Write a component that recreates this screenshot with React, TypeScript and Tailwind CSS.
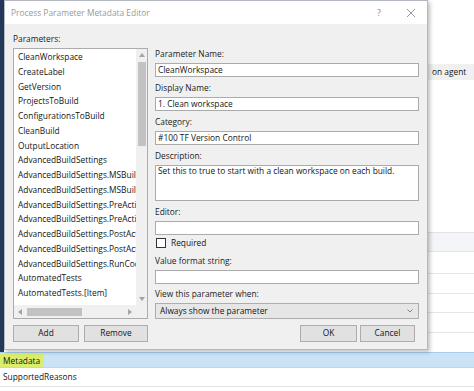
import React from "react";

const items = [
  "CleanWorkspace",
  "CreateLabel",
  "GetVersion",
  "ProjectsToBuild",
  "ConfigurationsToBuild",
  "CleanBuild",
  "OutputLocation",
  "AdvancedBuildSettings",
  "AdvancedBuildSettings.MSBuildArguments",
  "AdvancedBuildSettings.MSBuildPlatform",
  "AdvancedBuildSettings.PreActionScriptPath",
  "AdvancedBuildSettings.PreActionScriptArguments",
  "AdvancedBuildSettings.PostActionScriptPath",
  "AdvancedBuildSettings.PostActionScriptArguments",
  "AdvancedBuildSettings.RunCodeAnalysis",
  "AutomatedTests",
  "AutomatedTests.[Item]",
];

function Label({ children, className = "" }: { children: React.ReactNode; className?: string }) {
  return <div className={"h-[12px] leading-[12px] text-[#222222] whitespace-nowrap " + className}>{children}</div>;
}

function Input({ value = "", className = "" }: { value?: string; className?: string }) {
  return (
    <div className={"h-[14px] border border-[#ababab] bg-white pl-[2px] leading-[12px] text-[#141414] whitespace-nowrap overflow-hidden " + className}>
      {value}
    </div>
  );
}

function Btn({ children, className = "" }: { children: React.ReactNode; className?: string }) {
  return (
    <div className={"h-[17px] border border-[#adadad] bg-[#e1e1e1] flex items-center justify-center text-[#141414] " + className}>
      {children}
    </div>
  );
}

function Tri({ dir }: { dir: "up" | "down" | "left" | "right" }) {
  const pts =
    dir === "up" ? "0,4 3,0 6,4" : dir === "down" ? "0,0 6,0 3,4" : dir === "left" ? "4,0 4,6 0,3" : "0,0 0,6 4,3";
  const w = dir === "up" || dir === "down" ? 6 : 4;
  const h = dir === "up" || dir === "down" ? 4 : 6;
  return (
    <svg width={w} height={h} viewBox={`0 0 ${w} ${h}`}>
      <polygon points={pts} fill="#a3a3a3" />
    </svg>
  );
}

export default function App() {
  return (
    <div className="relative w-[474px] h-[391px] overflow-hidden bg-white text-[8.35px] text-[#141414] font-['Open_Sans',sans-serif]">
      {/* background page */}
      <div className="flex flex-col">
        <div className="flex h-[352px]">
          <div className="w-[4px] bg-[#26385a]" />
          <div className="flex-1 flex flex-col">
            <div className="h-[64px]" />
            <div className="h-[16px] bg-[#f0f0f0] flex items-center pl-[428px] whitespace-nowrap">on agent</div>
            <div className="h-[152px]" />
            <div className="h-[19px] border-t border-[#e2e2e2] bg-[#f3f5f8]" />
            <div className="h-[22px] border-t border-[#e6e6e6]" />
            <div className="h-[20px] border-t border-[#e6e6e6]" />
            <div className="h-[19px] border-t border-[#e6e6e6]" />
            <div className="h-[20px] border-t border-[#e6e6e6]" />
            <div className="h-[20px] border-t border-[#e6e6e6]" />
          </div>
        </div>
        <div className="h-[16px] bg-[#cbe3f7] border-t border-[#a9cdee] border-b border-b-[#b9d7f1] flex items-center">
          <span className="bg-[#dbee6a] pl-[3px] pr-[4px] h-[13px] leading-[13px] rounded-r-[3px]">Metadata</span>
        </div>
        <div className="h-[19px] border-b border-[#e3e3e3] flex items-center pl-[3px]">SupportedReasons</div>
      </div>

      {/* dialog window */}
      <div className="absolute left-[4px] top-0 w-[424px] h-[350px] flex flex-col bg-[#f0f0f0] border border-[#b4b8c0] shadow-[2px_2px_4px_rgba(0,0,0,0.25)]">
        <div className="h-[23px] bg-white flex items-center pl-[6px] pr-[10px] pt-[1px]">
          <span className="text-[#9a9a9a] text-[8.4px] whitespace-nowrap">Process Parameter Metadata Editor</span>
          <div className="flex-1" />
          <span className="text-[#8a8a8a] text-[9px] mr-[25px]">?</span>
          <svg width="10" height="10" viewBox="0 0 10 10" className="mr-[1px]">
            <path d="M1 1 L9 9 M9 1 L1 9" stroke="#8a8a8a" strokeWidth="0.9" />
          </svg>
        </div>

        <div className="flex flex-col px-[8px] pt-[9px]">
          <div className="flex gap-[7px]">
            {/* left column */}
            <div className="w-[135px] flex flex-col">
              <Label className="mb-[3px]">Parameters:</Label>
              <div className="h-[271px] border border-[#acacac] bg-white flex flex-col">
                <div className="flex flex-1 min-h-0">
                  <div className="flex-1 overflow-hidden pl-[4px] pt-[1px]">
                    {items.map((t) => (
                      <div key={t} className="h-[14.75px] leading-[14.75px] whitespace-nowrap text-[#141414]">
                        {t}
                      </div>
                    ))}
                  </div>
                  <div className="w-[11px] bg-[#f0f0f0] flex flex-col items-center">
                    <div className="h-[12px] flex items-center justify-center">
                      <Tri dir="up" />
                    </div>
                    <div className="w-[8px] h-[84px] mt-[1px] bg-[#c2c2c2]" />
                    <div className="flex-1" />
                    <div className="h-[12px] flex items-center justify-center">
                      <Tri dir="down" />
                    </div>
                  </div>
                </div>
                <div className="flex h-[13px]">
                  <div className="flex-1 bg-[#f0f0f0] flex items-center">
                    <div className="w-[11px] flex items-center justify-center">
                      <Tri dir="left" />
                    </div>
                    <div className="ml-[2px] w-[55px] h-[8px] bg-[#c2c2c2]" />
                    <div className="flex-1" />
                    <div className="w-[12px] flex items-center justify-center">
                      <Tri dir="right" />
                    </div>
                  </div>
                  <div className="w-[11px] bg-[#f0f0f0]" />
                </div>
              </div>
            </div>

            {/* right column */}
            <div className="w-[264px] flex flex-col pt-[15px]">
              <Label>Parameter Name:</Label>
              <Input className="mt-[3px]" value="CleanWorkspace" />
              <Label className="mt-[5px]">Display Name:</Label>
              <Input className="mt-[3px]" value="1. Clean workspace" />
              <Label className="mt-[5px]">Category:</Label>
              <Input className="mt-[3px]" value="#100 TF Version Control" />
              <Label className="mt-[5px]">Description:</Label>
              <div className="mt-[3px] h-[36px] border border-[#ababab] bg-white pl-[2px] leading-[9px] whitespace-nowrap text-[#141414]">
                Set this to true to start with a clean workspace on each build.
              </div>
              <Label className="mt-[5px]">Editor:</Label>
              <Input className="mt-[3px]" />
              <div className="mt-[2px] h-[12px] flex items-center gap-[5px] pl-[1px]">
                <div className="w-[10px] h-[10px] border border-[#333333] bg-white" />
                <span>Required</span>
              </div>
              <Label className="mt-[6px]">Value format string:</Label>
              <Input className="mt-[3px]" />
              <Label className="mt-[4px]">View this parameter when:</Label>
              <div className="mt-[3px] h-[16px] border border-[#adadad] bg-[#e6e6e6] flex items-center pl-[4px] pr-[5px]">
                <span className="flex-1 whitespace-nowrap">Always show the parameter</span>
                <svg width="6" height="4" viewBox="0 0 6 4">
                  <path d="M0.5 0.5 L3 3 L5.5 0.5" stroke="#777" strokeWidth="0.9" fill="none" />
                </svg>
              </div>
            </div>
          </div>

          {/* buttons */}
          <div className="mt-[6px] flex">
            <Btn className="w-[66px]">Add</Btn>
            <Btn className="w-[64px] ml-[5px]">Remove</Btn>
            <div className="flex-1" />
            <Btn className="w-[57px]">OK</Btn>
            <Btn className="w-[55px] ml-[3px] mr-[4px]">Cancel</Btn>
          </div>
        </div>
      </div>
    </div>
  );
}
